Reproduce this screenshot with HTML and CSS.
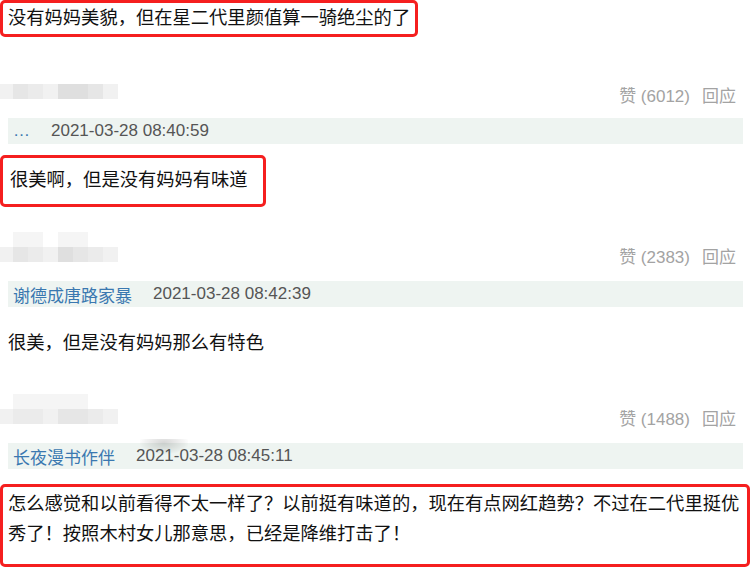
FILE: index.html
```html
<!DOCTYPE html>
<html lang="zh-CN">

<head>
    <meta charset="UTF-8">
    <meta name="viewport" content="width=device-width, initial-scale=1.0">
    <title>评论</title>

    <link rel="stylesheet" href="styles.css">
</head>

<body>
    <div id="comentarios">
        <div class="destaque destaque-topo">没有妈妈美貌，但在星二代里颜值算一骑绝尘的了</div>

        <div class="comentario">
            <div class="cabeca cabeca-1">
                <div class="mosaico">
                    <span></span><span></span><span></span><span></span><span></span><span></span><span></span><span></span>
                    <span class="g1"></span><span class="g3"></span><span class="g2"></span><span class="g1"></span><span class="g4"></span><span class="g4"></span><span class="g3"></span><span class="g1"></span>
                </div>
                <div class="acoes"><span>赞 (6012)</span><span>回应</span></div>
            </div>
            <div class="barra"><span class="nome">…</span><span class="data">2021-03-28 08:40:59</span></div>
            <div class="destaque destaque-curto">很美啊，但是没有妈妈有味道</div>
        </div>

        <div class="comentario">
            <div class="cabeca">
                <div class="mosaico">
                    <span></span><span class="g0"></span><span class="g0"></span><span></span><span class="g0"></span><span class="g0"></span><span></span><span></span>
                    <span class="g1"></span><span class="g3"></span><span class="g2"></span><span class="g1"></span><span class="g4"></span><span class="g3"></span><span class="g2"></span><span class="g1"></span>
                </div>
                <div class="acoes"><span>赞 (2383)</span><span>回应</span></div>
            </div>
            <div class="barra"><span class="nome">谢德成唐路家暴</span><span class="data">2021-03-28 08:42:39</span></div>
            <p class="texto">很美，但是没有妈妈那么有特色</p>
        </div>

        <div class="comentario">
            <div class="cabeca cabeca-3">
                <div class="mosaico">
                    <span></span><span class="g0"></span><span class="g0"></span><span class="g0"></span><span class="g0"></span><span class="g0"></span><span></span><span></span>
                    <span class="g1"></span><span class="g2"></span><span class="g2"></span><span class="g1"></span><span class="g3"></span><span class="g3"></span><span class="g2"></span><span class="g1"></span>
                </div>
                <div class="acoes"><span>赞 (1488)</span><span>回应</span></div>
            </div>
            <div class="barra barra-sombra"><span class="nome">长夜漫书作伴</span><span class="data">2021-03-28 08:45:11</span></div>
            <div class="destaque destaque-longo">怎么感觉和以前看得不太一样了？以前挺有味道的，现在有点网红趋势？不过在二代里挺优秀了！按照木村女儿那意思，已经是降维打击了！</div>
        </div>
    </div>
</body>

</html>
```

FILE: styles.css
```css
* {
    padding: 0;
    margin: 0;
    box-sizing: border-box;
}

body {
    background-color: white;
    font-family: "Liberation Sans", "Noto Sans CJK SC", sans-serif;
    color: #111;
}

#comentarios {
    width: 751px;
}

/* caixas vermelhas em volta do texto */
.destaque {
    border: 3px solid #f51f1f;
    border-radius: 5px;
    font-size: 18.3px;
}

.destaque-topo {
    display: inline-block;
    height: 37px;
    padding: 0 5px;
    line-height: 29px;
}

.destaque-curto {
    width: 266px;
    height: 52px;
    margin-top: 11px;
    padding: 0 7px;
    line-height: 44px;
}

.destaque-longo {
    width: 750px;
    height: 83px;
    margin-top: 15px;
    padding: 2px 5px 0 5px;
    line-height: 30px;
}

.cabeca {
    display: flex;
    justify-content: space-between;
    height: 46px;
    margin-top: 24px;
    padding-top: 1px;
}

.cabeca-1 {
    margin-top: 31px;
}

.cabeca-1 .acoes {
    margin-bottom: 7px;
}

.cabeca-3 {
    margin-top: 37px;
}

/* nome borrado */
.mosaico {
    display: grid;
    grid-template-columns: 13px repeat(7, 15px);
    grid-template-rows: 15px 15px;
}

.mosaico span {
    background-color: white;
}

.mosaico .g0 {
    background-color: #f5f5f5;
}

.mosaico .g1 {
    background-color: #f1f1f1;
}

.mosaico .g2 {
    background-color: #ebebeb;
}

.mosaico .g3 {
    background-color: #e6e6e6;
}

.mosaico .g4 {
    background-color: #dfdfdf;
}

.acoes {
    display: flex;
    gap: 12px;
    align-self: flex-end;
    margin: 0 15px 9px 0;
    font-size: 17px;
    line-height: 20px;
    color: #a3a3a3;
}

.barra {
    position: relative;
    display: flex;
    align-items: center;
    height: 26px;
    margin: 4px 8px 0 8px;
    padding-left: 5px;
    background-color: #eef4f1;
    font-size: 17px;
}

.nome {
    margin-right: 21px;
    color: #3a78b0;
}

.data {
    position: relative;
    color: #555;
}

/* sombra do menu que fica por cima */
.barra-sombra::before {
    content: '';
    position: absolute;
    left: 132px;
    top: -4px;
    width: 48px;
    height: 15px;
    border-radius: 0 0 50% 50%;
    background: radial-gradient(ellipse at 50% 25%, rgba(0, 0, 0, 0.16), rgba(0, 0, 0, 0.04) 60%, rgba(0, 0, 0, 0) 75%);
}

.texto {
    margin-top: 23px;
    padding-left: 8px;
    font-size: 18.3px;
    line-height: 26px;
}
```
